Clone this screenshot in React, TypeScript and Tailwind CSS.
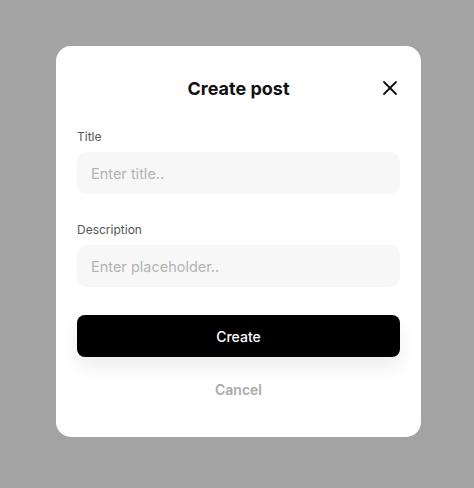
import React from 'react';

function CloseIcon() {
  return (
    <svg width="16" height="16" viewBox="0 0 16 16" fill="none" stroke="#111" strokeWidth="1.8" strokeLinecap="round">
      <path d="M2 2 L14 14" />
      <path d="M14 2 L2 14" />
    </svg>
  );
}

function Field({ label, placeholder }: { label: string; placeholder: string }) {
  return (
    <div className="flex flex-col">
      <label className="text-[12px] leading-[18px] text-[#555]">{label}</label>
      <input
        className="mt-[6px] h-[42px] w-full rounded-[10px] bg-[#f7f7f7] px-[14px] text-[14.5px] text-[#222] outline-none placeholder:text-[#b3b3b3]"
        placeholder={placeholder}
      />
    </div>
  );
}

export default function App() {
  return (
    <div
      className="min-h-[488px] w-full bg-[#a3a3a3] pl-[56px] pt-[46px]"
      style={{ fontFamily: 'Inter, "Noto Sans", sans-serif' }}
    >
      <div className="flex h-[391px] w-[365px] flex-col rounded-[15px] bg-white px-[21px]">
        {/* header */}
        <div className="relative mt-[28px] flex h-[28px] items-center justify-center">
          <h2 className="text-[18px] font-bold text-[#111]">Create post</h2>
          <button className="absolute right-[2px] top-[6px]">
            <CloseIcon />
          </button>
        </div>

        <div className="mt-[26px]">
          <Field label="Title" placeholder="Enter title.." />
        </div>
        <div className="mt-[27px]">
          <Field label="Description" placeholder="Enter placeholder.." />
        </div>

        <button className="mt-[28px] h-[42px] w-full rounded-[8px] bg-black text-[14px] font-medium text-white shadow-[0_10px_18px_rgba(0,0,0,0.07)]">
          Create
        </button>
        <button className="mt-[22px] h-[20px] text-[14px] font-semibold text-[#aaaaaa]">Cancel</button>
      </div>
    </div>
  );
}
